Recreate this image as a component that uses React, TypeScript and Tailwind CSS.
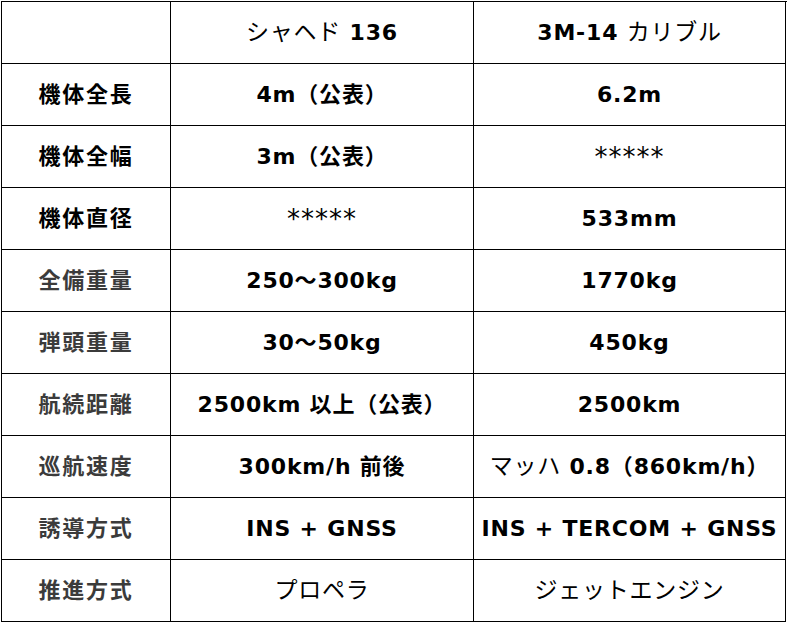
import React from "react";

type Cell = React.ReactNode;

const K = ({ children }: { children: React.ReactNode }) => (
  <span className="font-normal text-[23px] tracking-[0.75px]">{children}</span>
);

const Stars = () => <span className="font-normal text-[26px] tracking-[1px] leading-none">*****</span>;

const rows: { label: string; gray?: boolean; a: Cell; b: Cell }[] = [
  { label: "機体全長", a: "4m（公表）", b: "6.2m" },
  { label: "機体全幅", a: "3m（公表）", b: <Stars /> },
  { label: "機体直径", a: <Stars />, b: "533mm" },
  { label: "全備重量", gray: true, a: "250～300kg", b: "1770kg" },
  { label: "弾頭重量", gray: true, a: "30～50kg", b: "450kg" },
  { label: "航続距離", gray: true, a: "2500km 以上（公表）", b: "2500km" },
  {
    label: "巡航速度",
    gray: true,
    a: "300km/h 前後",
    b: (
      <>
        <K>マッハ</K>&nbsp;0.8（860km/h）
      </>
    ),
  },
  { label: "誘導方式", gray: true, a: "INS + GNSS", b: "INS + TERCOM + GNSS" },
  { label: "推進方式", gray: true, a: <K>プロペラ</K>, b: <K>ジェットエンジン</K> },
];

export default function App() {
  const cell =
    "h-[62px] border-r border-b border-black flex items-center justify-center whitespace-nowrap";
  return (
    <div className="w-[787px] h-[623px] bg-white">
      <div
        className="ml-px mt-px grid grid-cols-[169px_303px_312px] border-l border-t border-black text-[22px] font-bold tracking-[0.8px] text-black"
        style={{ fontFamily: '"DejaVu Sans", Verdana, "Noto Sans CJK JP", sans-serif' }}
      >
        <div className={cell}></div>
        <div className={cell}>
          <K>シャヘド</K>&nbsp;136
        </div>
        <div className={cell}>
          3M-14&nbsp;<K>カリブル</K>
        </div>
        {rows.map((r) => (
          <React.Fragment key={r.label}>
            <div
              className={`${cell} tracking-[1.75px] ${r.gray ? "text-[#3b3b3b]" : "text-black"}`}
            >
              {r.label}
            </div>
            <div className={cell}>{r.a}</div>
            <div className={cell}>{r.b}</div>
          </React.Fragment>
        ))}
      </div>
    </div>
  );
}
